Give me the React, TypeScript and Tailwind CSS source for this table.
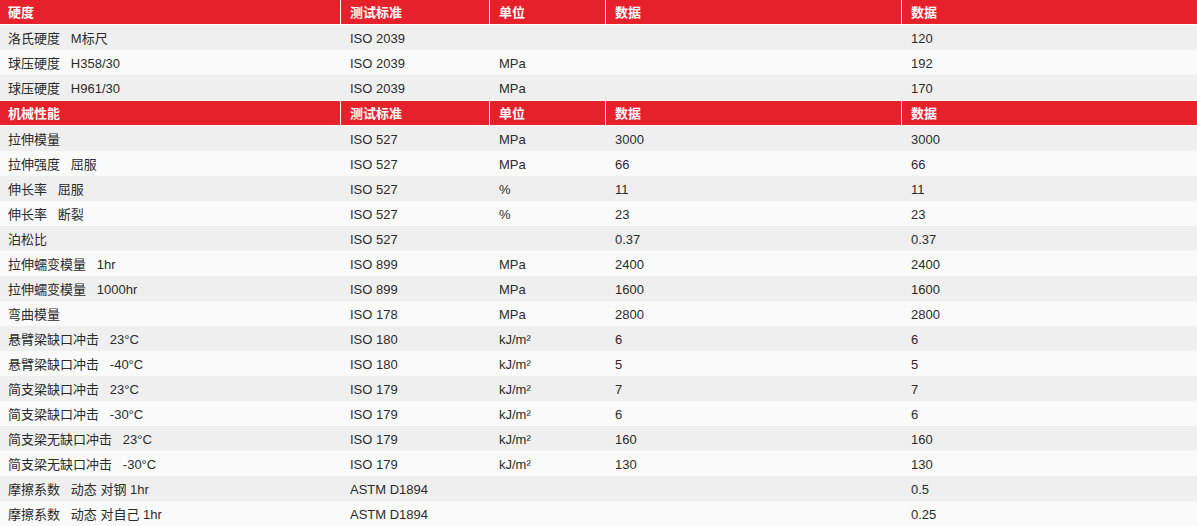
type Row = [string, string, string, string, string];

const HEAD = ['测试标准', '单位', '数据', '数据'];

const sections: { title: string; rows: Row[] }[] = [
  {
    title: '硬度',
    rows: [
      ['洛氏硬度   M标尺', 'ISO 2039', '', '', '120'],
      ['球压硬度   H358/30', 'ISO 2039', 'MPa', '', '192'],
      ['球压硬度   H961/30', 'ISO 2039', 'MPa', '', '170'],
    ],
  },
  {
    title: '机械性能',
    rows: [
      ['拉伸模量', 'ISO 527', 'MPa', '3000', '3000'],
      ['拉伸强度   屈服', 'ISO 527', 'MPa', '66', '66'],
      ['伸长率   屈服', 'ISO 527', '%', '11', '11'],
      ['伸长率   断裂', 'ISO 527', '%', '23', '23'],
      ['泊松比', 'ISO 527', '', '0.37', '0.37'],
      ['拉伸蠕变模量   1hr', 'ISO 899', 'MPa', '2400', '2400'],
      ['拉伸蠕变模量   1000hr', 'ISO 899', 'MPa', '1600', '1600'],
      ['弯曲模量', 'ISO 178', 'MPa', '2800', '2800'],
      ['悬臂梁缺口冲击   23°C', 'ISO 180', 'kJ/m²', '6', '6'],
      ['悬臂梁缺口冲击   -40°C', 'ISO 180', 'kJ/m²', '5', '5'],
      ['简支梁缺口冲击   23°C', 'ISO 179', 'kJ/m²', '7', '7'],
      ['简支梁缺口冲击   -30°C', 'ISO 179', 'kJ/m²', '6', '6'],
      ['简支梁无缺口冲击   23°C', 'ISO 179', 'kJ/m²', '160', '160'],
      ['简支梁无缺口冲击   -30°C', 'ISO 179', 'kJ/m²', '130', '130'],
      ['摩擦系数   动态 对钢 1hr', 'ASTM D1894', '', '', '0.5'],
      ['摩擦系数   动态 对自己 1hr', 'ASTM D1894', '', '', '0.25'],
    ],
  },
];

const cols = 'grid grid-cols-[341px_149px_116px_296px_1fr] h-[25px]';

function HeaderRow({ title }: { title: string }) {
  const cells = [title, ...HEAD];
  return (
    <div className={`${cols} bg-white`}>
      {cells.map((c, i) => (
        <div
          key={i}
          className={`bg-[#e6212b] text-white font-bold h-[24px] flex items-center ${
            i < 4 ? 'mr-px' : ''
          } ${i > 0 ? 'pl-[9px]' : 'pl-[8px]'}`}
        >
          {c}
        </div>
      ))}
    </div>
  );
}

export default function App() {
  return (
    <div
      className="w-[1197px] text-[13px] text-[#2b2b2b] leading-none"
      style={{ fontFamily: '"Liberation Sans", Arial, "Noto Sans CJK SC", sans-serif' }}
    >
      {sections.map((s, k) => (
        <div key={s.title} className={k > 0 ? 'border-t border-white' : ''}>
          <HeaderRow title={s.title} />
          {s.rows.map((r, i) => (
            <div key={i} className={`${cols} ${i % 2 === 0 ? 'bg-[#efefef]' : 'bg-[#fafafa]'}`}>
              {r.map((c, j) => (
                <div
                  key={j}
                  className={`flex items-center pt-px whitespace-pre ${j === 0 ? 'pl-[8px]' : 'pl-[9px]'}`}
                >
                  {c}
                </div>
              ))}
            </div>
          ))}
        </div>
      ))}
    </div>
  );
}
